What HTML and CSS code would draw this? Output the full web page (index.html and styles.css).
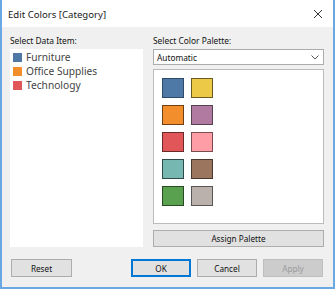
FILE: index.html
```html
<!DOCTYPE html>
<html>
<head>
<meta charset="utf-8">
<link rel="stylesheet" href="styles.css">
</head>
<body>
<div class="window">
  <div class="titlebar">
    <span class="title">Edit Colors [Category]</span>
    <svg class="close" width="10" height="10" viewBox="0 0 10 10"><path d="M1 1L9 9M9 1L1 9" stroke="#333" stroke-width="1" fill="none"/></svg>
  </div>
  <div class="content">
    <div class="col left">
      <div class="label">Select Data Item:</div>
      <div class="list">
        <div class="item"><span class="sw" style="background:#4e79a7"></span>Furniture</div>
        <div class="item"><span class="sw" style="background:#f28e2b"></span>Office Supplies</div>
        <div class="item"><span class="sw" style="background:#e15759"></span>Technology</div>
      </div>
    </div>
    <div class="col right">
      <div class="label">Select Color Palette:</div>
      <div class="select">
        <span>Automatic</span>
        <svg width="8" height="5" viewBox="0 0 8 5"><path d="M0.5 0.5L4 4L7.5 0.5" stroke="#555" stroke-width="1" fill="none"/></svg>
      </div>
      <div class="palette">
        <div class="swatches">
          <span class="chip" style="background:#4e79a7;border-color:#2f4a66"></span>
          <span class="chip" style="background:#edc948;border-color:#6b5a20"></span>
          <span class="chip" style="background:#f28e2b;border-color:#6e4014"></span>
          <span class="chip" style="background:#b07aa1;border-color:#57404f"></span>
          <span class="chip" style="background:#e15759;border-color:#6a2a2a"></span>
          <span class="chip" style="background:#ff9da7;border-color:#7a4b50"></span>
          <span class="chip" style="background:#76b7b2;border-color:#2f4a48"></span>
          <span class="chip" style="background:#9c755f;border-color:#4a372d"></span>
          <span class="chip" style="background:#59a14f;border-color:#274a23"></span>
          <span class="chip" style="background:#bab0ac;border-color:#5a5452"></span>
        </div>
      </div>
      <div class="btn assign">Assign Palette</div>
    </div>
  </div>
  <div class="footer">
    <div class="btn reset">Reset</div>
    <div class="spacer"></div>
    <div class="btn ok">OK</div>
    <div class="btn">Cancel</div>
    <div class="btn disabled">Apply</div>
  </div>
</div>
</body>
</html>
```
FILE: styles.css
```css
html, body {
  margin: 0;
  padding: 0;
  background: #ffffff;
}
.window {
  width: 335px;
  height: 289px;
  box-sizing: border-box;
  border: 2px solid #6aa8e4;
  border-top: none;
  background: #f0f0f0;
  display: flex;
  flex-direction: column;
  font-family: "Noto Sans", "Open Sans", sans-serif;
  color: #111;
}
.titlebar {
  height: 27px;
  flex: none;
  background: #ffffff;
  display: flex;
  align-items: center;
  justify-content: space-between;
  padding: 1px 10px 0 6px;
  box-sizing: border-box;
}
.title {
  font-size: 9.6px;
  color: #1a1a1a;
}
.close {
  display: block;
}
.content {
  display: grid;
  grid-template-columns: 133px 171px;
  column-gap: 10px;
  padding: 6px 9px 0 8px;
}
.col {
  display: flex;
  flex-direction: column;
}
.label {
  font-size: 8.4px;
  line-height: 15px;
  height: 16px;
  color: #111;
}
.list {
  background: #ffffff;
  height: 198px;
  padding-top: 1px;
  box-sizing: border-box;
}
.item {
  display: flex;
  align-items: center;
  height: 14px;
  font-size: 10.2px;
  color: #444;
  padding-left: 3px;
}
.sw {
  width: 9px;
  height: 9px;
  margin-right: 4px;
  flex: none;
}
.select {
  height: 16px;
  box-sizing: border-box;
  background: #fff;
  border: 1px solid #acacac;
  display: flex;
  align-items: center;
  justify-content: space-between;
  padding: 0 4px 0 3px;
  font-size: 8.3px;
}
.palette {
  margin-top: 4px;
  height: 155px;
  box-sizing: border-box;
  background: #fff;
  border: 1px solid #bcbcbc;
  padding: 8px 0 0 8px;
}
.swatches {
  display: grid;
  grid-template-columns: 22px 22px;
  grid-auto-rows: 20px;
  column-gap: 7px;
  row-gap: 7px;
}
.chip {
  box-sizing: border-box;
  border: 1px solid #333;
}
.btn {
  box-sizing: border-box;
  height: 18px;
  width: 60px;
  background: #e1e1e1;
  border: 1px solid #adadad;
  font-size: 8.2px;
  display: flex;
  align-items: center;
  justify-content: center;
  color: #111;
}
.assign {
  width: 171px;
  height: 17px;
  margin-top: 6px;
}
.footer {
  display: flex;
  padding: 12px 10px 0 9px;
  gap: 6px;
}
.spacer {
  flex: 1;
}
.reset {
  width: 61px;
}
.ok {
  border: 1px solid #0078d7;
  box-shadow: inset 0 0 0 1px #0078d7;
}
.disabled {
  background: #cccccc;
  border-color: #bfbfbf;
  color: #9a9a9a;
}
```
